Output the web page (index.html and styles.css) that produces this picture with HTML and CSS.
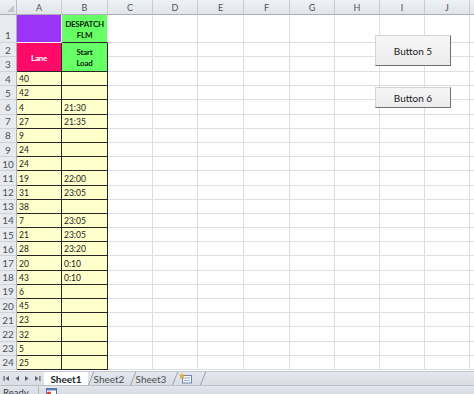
FILE: index.html
```html
<!DOCTYPE html>
<html>
<head>
<meta charset="utf-8">
<link rel="stylesheet" href="styles.css">
</head>
<body>
<div class="app">
  <div class="sheet">
    <div class="grid">
      <div class="corner"></div>
      <div class="ch">A</div><div class="ch">B</div><div class="ch">C</div><div class="ch">D</div><div class="ch">E</div><div class="ch">F</div><div class="ch">G</div><div class="ch">H</div><div class="ch">I</div><div class="ch">J</div><div class="ch"></div>

      <div class="rh bottom">1</div><div class="c purple"></div><div class="c green hd top-box">DESPATCH<br>FLM</div>
      <div class="c"></div><div class="c"></div><div class="c"></div><div class="c"></div><div class="c"></div><div class="c"></div><div class="c"></div><div class="c"></div><div class="c"></div>

      <div class="rh">2</div><div class="c pink hd m">Lane</div><div class="c green hd m box">Start<br>Load</div>
      <div class="c"></div><div class="c"></div><div class="c"></div><div class="c"></div><div class="c"></div><div class="c"></div><div class="c"></div><div class="c"></div><div class="c"></div>

      <div class="rh">3</div>
      <div class="c"></div><div class="c"></div><div class="c"></div><div class="c"></div><div class="c"></div><div class="c"></div><div class="c"></div><div class="c"></div><div class="c"></div>

      <div class="rh">4</div><div class="c y">40</div><div class="c y"></div>
      <div class="c"></div><div class="c"></div><div class="c"></div><div class="c"></div><div class="c"></div><div class="c"></div><div class="c"></div><div class="c"></div><div class="c"></div>
      <div class="rh">5</div><div class="c y">42</div><div class="c y"></div>
      <div class="c"></div><div class="c"></div><div class="c"></div><div class="c"></div><div class="c"></div><div class="c"></div><div class="c"></div><div class="c"></div><div class="c"></div>
      <div class="rh">6</div><div class="c y">4</div><div class="c y">21:30</div>
      <div class="c"></div><div class="c"></div><div class="c"></div><div class="c"></div><div class="c"></div><div class="c"></div><div class="c"></div><div class="c"></div><div class="c"></div>
      <div class="rh">7</div><div class="c y">27</div><div class="c y">21:35</div>
      <div class="c"></div><div class="c"></div><div class="c"></div><div class="c"></div><div class="c"></div><div class="c"></div><div class="c"></div><div class="c"></div><div class="c"></div>
      <div class="rh">8</div><div class="c y">9</div><div class="c y"></div>
      <div class="c"></div><div class="c"></div><div class="c"></div><div class="c"></div><div class="c"></div><div class="c"></div><div class="c"></div><div class="c"></div><div class="c"></div>
      <div class="rh">9</div><div class="c y">24</div><div class="c y"></div>
      <div class="c"></div><div class="c"></div><div class="c"></div><div class="c"></div><div class="c"></div><div class="c"></div><div class="c"></div><div class="c"></div><div class="c"></div>
      <div class="rh">10</div><div class="c y">24</div><div class="c y"></div>
      <div class="c"></div><div class="c"></div><div class="c"></div><div class="c"></div><div class="c"></div><div class="c"></div><div class="c"></div><div class="c"></div><div class="c"></div>
      <div class="rh">11</div><div class="c y">19</div><div class="c y">22:00</div>
      <div class="c"></div><div class="c"></div><div class="c"></div><div class="c"></div><div class="c"></div><div class="c"></div><div class="c"></div><div class="c"></div><div class="c"></div>
      <div class="rh">12</div><div class="c y">31</div><div class="c y">23:05</div>
      <div class="c"></div><div class="c"></div><div class="c"></div><div class="c"></div><div class="c"></div><div class="c"></div><div class="c"></div><div class="c"></div><div class="c"></div>
      <div class="rh">13</div><div class="c y">38</div><div class="c y"></div>
      <div class="c"></div><div class="c"></div><div class="c"></div><div class="c"></div><div class="c"></div><div class="c"></div><div class="c"></div><div class="c"></div><div class="c"></div>
      <div class="rh">14</div><div class="c y">7</div><div class="c y">23:05</div>
      <div class="c"></div><div class="c"></div><div class="c"></div><div class="c"></div><div class="c"></div><div class="c"></div><div class="c"></div><div class="c"></div><div class="c"></div>
      <div class="rh">15</div><div class="c y">21</div><div class="c y">23:05</div>
      <div class="c"></div><div class="c"></div><div class="c"></div><div class="c"></div><div class="c"></div><div class="c"></div><div class="c"></div><div class="c"></div><div class="c"></div>
      <div class="rh">16</div><div class="c y">28</div><div class="c y">23:20</div>
      <div class="c"></div><div class="c"></div><div class="c"></div><div class="c"></div><div class="c"></div><div class="c"></div><div class="c"></div><div class="c"></div><div class="c"></div>
      <div class="rh">17</div><div class="c y">20</div><div class="c y">0:10</div>
      <div class="c"></div><div class="c"></div><div class="c"></div><div class="c"></div><div class="c"></div><div class="c"></div><div class="c"></div><div class="c"></div><div class="c"></div>
      <div class="rh">18</div><div class="c y">43</div><div class="c y">0:10</div>
      <div class="c"></div><div class="c"></div><div class="c"></div><div class="c"></div><div class="c"></div><div class="c"></div><div class="c"></div><div class="c"></div><div class="c"></div>
      <div class="rh">19</div><div class="c y">6</div><div class="c y"></div>
      <div class="c"></div><div class="c"></div><div class="c"></div><div class="c"></div><div class="c"></div><div class="c"></div><div class="c"></div><div class="c"></div><div class="c"></div>
      <div class="rh">20</div><div class="c y">45</div><div class="c y"></div>
      <div class="c"></div><div class="c"></div><div class="c"></div><div class="c"></div><div class="c"></div><div class="c"></div><div class="c"></div><div class="c"></div><div class="c"></div>
      <div class="rh">21</div><div class="c y">23</div><div class="c y"></div>
      <div class="c"></div><div class="c"></div><div class="c"></div><div class="c"></div><div class="c"></div><div class="c"></div><div class="c"></div><div class="c"></div><div class="c"></div>
      <div class="rh">22</div><div class="c y">32</div><div class="c y"></div>
      <div class="c"></div><div class="c"></div><div class="c"></div><div class="c"></div><div class="c"></div><div class="c"></div><div class="c"></div><div class="c"></div><div class="c"></div>
      <div class="rh">23</div><div class="c y">5</div><div class="c y"></div>
      <div class="c"></div><div class="c"></div><div class="c"></div><div class="c"></div><div class="c"></div><div class="c"></div><div class="c"></div><div class="c"></div><div class="c"></div>
      <div class="rh">24</div><div class="c y">25</div><div class="c y"></div>
      <div class="c"></div><div class="c"></div><div class="c"></div><div class="c"></div><div class="c"></div><div class="c"></div><div class="c"></div><div class="c"></div><div class="c"></div>
    </div>
    <button class="xbtn b5">Button 5</button>
    <button class="xbtn b6">Button 6</button>
  </div>

  <div class="tabs">
    <div class="nav">
      <svg width="7" height="7" viewBox="0 0 7 7"><rect x="0.5" y="1" width="1.2" height="5" fill="#5a5f6a"/><path d="M6 1 L2.5 3.5 L6 6 Z" fill="#5a5f6a"/></svg>
      <svg width="6" height="7" viewBox="0 0 6 7"><path d="M5 1 L1.5 3.5 L5 6 Z" fill="#5a5f6a"/></svg>
      <svg width="6" height="7" viewBox="0 0 6 7"><path d="M1 1 L4.5 3.5 L1 6 Z" fill="#5a5f6a"/></svg>
      <svg width="7" height="7" viewBox="0 0 7 7"><path d="M1 1 L4.5 3.5 L1 6 Z" fill="#5a5f6a"/><rect x="5.3" y="1" width="1.2" height="5" fill="#5a5f6a"/></svg>
    </div>
    <div class="tab active">Sheet1</div>
    <div class="tab">Sheet2</div>
    <div class="tab">Sheet3</div>
    <div class="tab newtab">
      <svg width="14" height="11" viewBox="0 0 14 11"><rect x="3.5" y="2.5" width="9" height="7.5" fill="#f4f7fb" stroke="#6d86b0"/><line x1="5" y1="5" x2="11" y2="5" stroke="#9fb3d3"/><line x1="5" y1="7.5" x2="11" y2="7.5" stroke="#9fb3d3"/><path d="M3 0.5 L3.8 2.2 L5.6 2.3 L4.2 3.4 L4.7 5.2 L3 4.2 L1.3 5.2 L1.8 3.4 L0.4 2.3 L2.2 2.2 Z" fill="#f3b431" stroke="#c98a12" stroke-width="0.4"/></svg>
    </div>
    <div class="tabrest"></div>
  </div>

  <div class="status">
    <span class="ready">Ready</span>
    <span class="sep"></span>
    <svg class="rec" width="11" height="9" viewBox="0 0 11 9"><rect x="0.5" y="0.5" width="10" height="8" fill="#fff" stroke="#5b6f92"/><rect x="0.5" y="0.5" width="10" height="2" fill="#5b7fc0"/><circle cx="3" cy="5.5" r="2" fill="#d93a2b"/></svg>
  </div>
</div>
</body>
</html>
```

FILE: styles.css
```css
html, body {
  margin: 0;
  padding: 0;
  background: #ffffff;
}

.app {
  width: 474px;
  height: 394px;
  overflow: hidden;
  display: flex;
  flex-direction: column;
  font-family: "Lato", "Liberation Sans", sans-serif;
}

.sheet {
  position: relative;
  flex: 0 0 371px;
  overflow: hidden;
}

.grid {
  display: grid;
  grid-template-columns: 17px 45px 46px 45px 45px 46px 46px 45px 45px 45px 45px 1fr;
  grid-template-rows: 15px 28px 14px 15px repeat(21, 14.2px);
}

.corner {
  position: relative;
  background: linear-gradient(#eef1f5, #e1e5ea);
  border-right: 1px solid #b9bec6;
  border-bottom: 1px solid #a9b0b9;
}
.corner::after {
  content: "";
  position: absolute;
  right: 2px;
  bottom: 2px;
  width: 0;
  height: 0;
  border-left: 7px solid transparent;
  border-bottom: 7px solid #c2c6cc;
}

.ch {
  background: linear-gradient(#eef1f5, #e1e5ea);
  border-right: 1px solid #c6cbd2;
  border-bottom: 1px solid #a9b0b9;
  color: #4e5258;
  font-size: 9px;
  display: flex;
  align-items: center;
  justify-content: center;
}

.rh {
  grid-column: 1;
  background: #e7eaef;
  border-right: 1px solid #a9b0b9;
  border-bottom: 1px solid #cfd3d9;
  color: #4e5258;
  font-size: 10px;
  display: flex;
  align-items: center;
  justify-content: center;
  box-sizing: border-box;
}
.rh.bottom {
  align-items: flex-end;
  padding-bottom: 1px;
}

.c {
  border-right: 1px solid #dcdee1;
  border-bottom: 1px solid #dcdee1;
  font-size: 8.5px;
  color: #1a1a1a;
  display: flex;
  align-items: flex-end;
  padding: 0 2px 1px;
  white-space: nowrap;
  overflow: hidden;
  min-width: 0;
  box-sizing: border-box;
}

.y {
  background: #ffffcc;
  border-right-color: #262626;
  border-bottom-color: #262626;
}

.m {
  grid-row: span 2;
}

.purple {
  background: #9b34f6;
  border-right-color: #f4f0f8;
  border-bottom-color: #f4f0f8;
}

.green {
  background: #66ff66;
}

.pink {
  background: #ff0a66;
  color: #ffffff;
  border-right-color: #262626;
  border-bottom-color: #262626;
}

.hd {
  font-weight: bold;
  font-size: 8px;
  line-height: 11px;
  letter-spacing: -0.25px;
  text-align: center;
  justify-content: center;
  align-items: center;
  padding: 2px 0 0;
  white-space: normal;
}
.green.hd {
  color: #10230f;
}

.top-box {
  border-bottom-color: #262626;
  border-right-color: #e8f6e8;
}

.box {
  border-right-color: #262626;
  border-bottom-color: #262626;
}

.xbtn {
  position: absolute;
  left: 375px;
  width: 76px;
  margin: 0;
  padding: 0;
  background: linear-gradient(#f6f6f6, #ececec);
  border: 1px solid;
  border-color: #d4d4d4 #6f6f6f #6f6f6f #d4d4d4;
  border-radius: 0;
  font-family: "Lato", "Liberation Sans", sans-serif;
  font-size: 10px;
  color: #1c1c1c;
}
.b5 {
  top: 35px;
  height: 31px;
}
.b6 {
  top: 87px;
  height: 21px;
}

.tabs {
  flex: 0 0 13px;
  display: flex;
  align-items: stretch;
  background: linear-gradient(#e4e7ec, #d9dde4);
  border-top: 1px solid #c3c7cf;
}

.nav {
  width: 44px;
  display: flex;
  align-items: center;
  gap: 4px;
  padding-left: 3px;
  box-sizing: border-box;
}

.tab {
  position: relative;
  width: 42px;
  display: flex;
  align-items: center;
  justify-content: center;
  font-size: 10px;
  color: #4a4e55;
}
.tab::after {
  content: "";
  position: absolute;
  right: -1px;
  top: 0;
  height: 13px;
  width: 1px;
  background: #9aa1ac;
  transform: skewX(-22deg);
  transform-origin: bottom;
}
.tab.active {
  background: #ffffff;
  font-weight: bold;
  color: #20242a;
  width: 44px;
}
.newtab {
  width: 28px;
}

.tabrest {
  flex: 1;
}

.status {
  flex: 1;
  display: flex;
  align-items: flex-start;
  background: linear-gradient(#e3e6ec, #d8dce3);
  border-top: 1px solid #b9bec7;
  overflow: hidden;
}
.ready {
  font-size: 9.5px;
  color: #3c4048;
  margin: 1px 0 0 3px;
  line-height: 11px;
}
.sep {
  width: 1px;
  height: 10px;
  background: #b3b8c1;
  margin-left: 9px;
}
.rec {
  margin: 2px 0 0 7px;
}
```
